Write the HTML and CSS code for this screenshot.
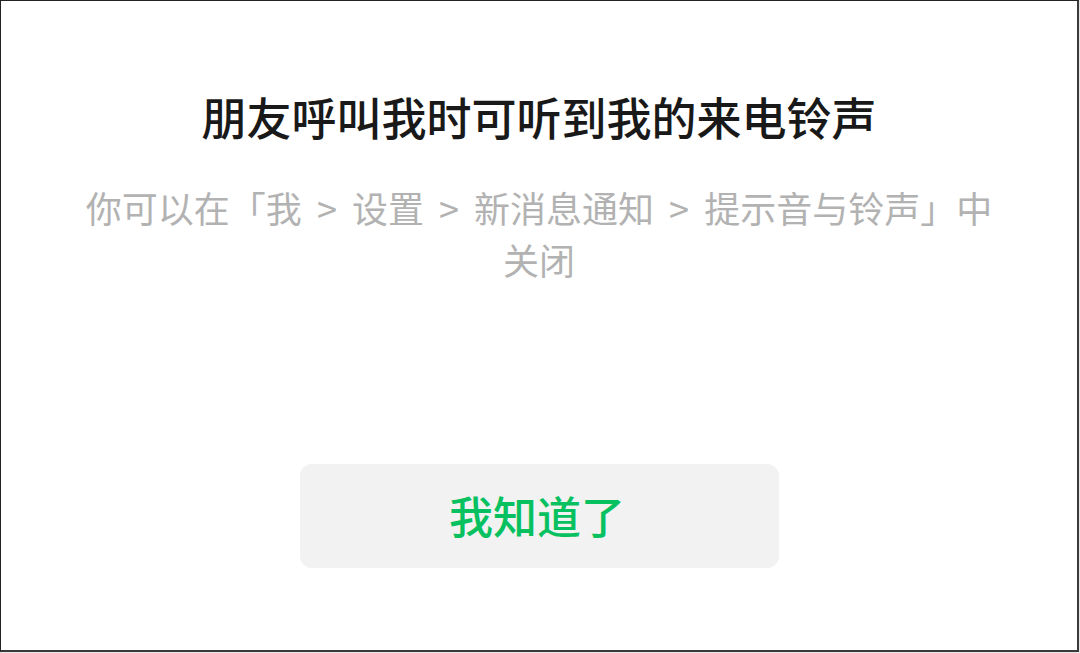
FILE: index.html
```html
<!DOCTYPE html>
<html lang="zh-CN">
<head>
<meta charset="utf-8">
<title>来电铃声</title>
<link rel="stylesheet" href="styles.css">
</head>
<body>
<div class="frame">
  <div class="dialog">
    <h1 class="title">朋友呼叫我时可听到我的来电铃声</h1>
    <p class="desc">你可以在「我 &gt; 设置 &gt; 新消息通知 &gt; 提示音与铃声」中关闭</p>
    <button class="ok-btn">我知道了</button>
  </div>
</div>
</body>
</html>
```
FILE: styles.css
```css
html, body {
  margin: 0;
  padding: 0;
  background: #e6e6e6;
}
body {
  width: 1080px;
  height: 653px;
  overflow: hidden;
  font-family: "Noto Sans CJK SC", "Noto Sans", sans-serif;
}
.frame {
  box-sizing: border-box;
  width: 1079px;
  height: 652px;
  background: #ffffff;
  border-style: solid;
  border-color: #222222 #3a3a3a #3a3a3a #222222;
  border-width: 1px 2px 2px 1px;
}
.dialog {
  display: flex;
  flex-direction: column;
  align-items: center;
  padding: 84px 80px 0;
}
.title {
  margin: 0;
  font-size: 45px;
  line-height: 64px;
  font-weight: 500;
  color: #191919;
  text-align: center;
}
.desc {
  margin: 32px 0 0;
  width: 920px;
  font-size: 36px;
  line-height: 52px;
  font-weight: 400;
  word-spacing: 7px;
  color: #b2b2b2;
  text-align: center;
}
.ok-btn {
  margin-top: 179px;
  width: 479px;
  height: 104px;
  border: none;
  border-radius: 12px;
  background: #f2f2f2;
  color: #07c160;
  font-family: "Noto Sans CJK SC", "Noto Sans", sans-serif;
  font-size: 44px;
  font-weight: 500;
  padding: 0 4px 3px 0;
}
```
